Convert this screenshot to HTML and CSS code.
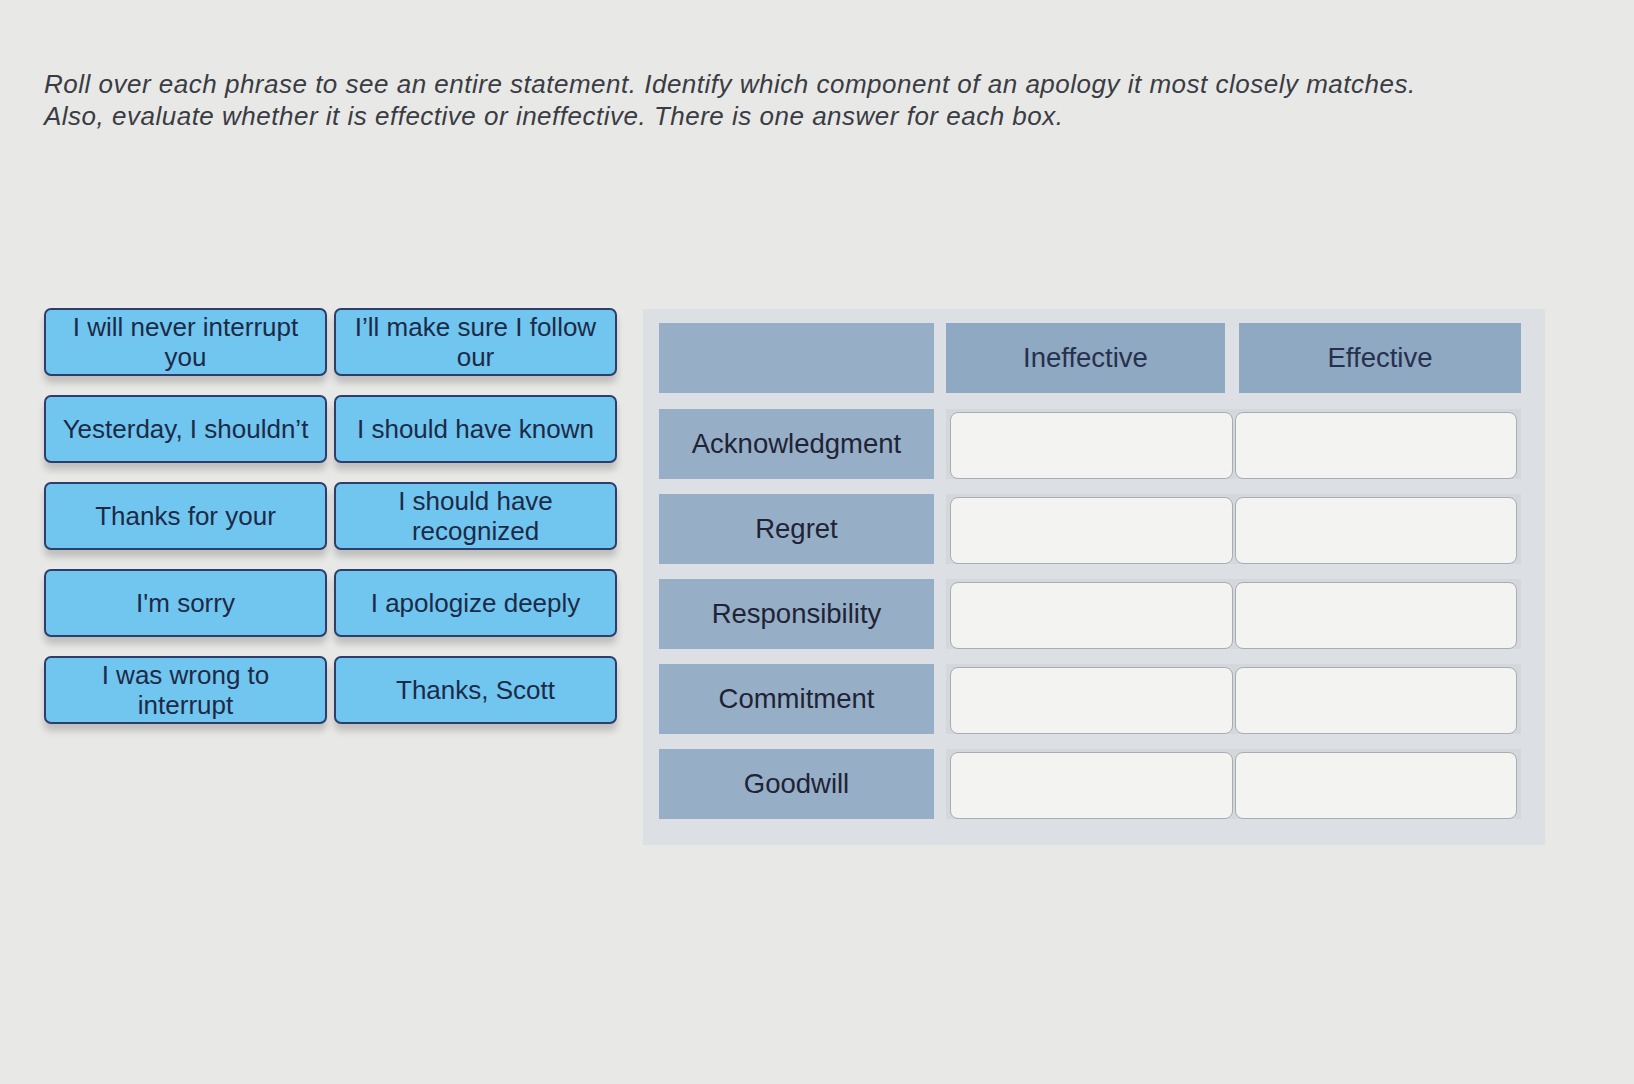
FILE: index.html
```html
<!DOCTYPE html>
<html lang="en">
<head>
<meta charset="utf-8">
<title>Apology components</title>
<link rel="stylesheet" href="styles.css">
</head>
<body>
<div class="page">
  <p class="instructions">Roll over each phrase to see an entire statement. Identify which component of an apology it most closely matches.<br>Also, evaluate whether it is effective or ineffective. There is one answer for each box.</p>
  <div class="activity">
    <div class="tiles">
      <div class="tile">I will never interrupt you</div>
      <div class="tile">I’ll make sure I follow our</div>
      <div class="tile">Yesterday, I shouldn’t</div>
      <div class="tile">I should have known</div>
      <div class="tile">Thanks for your</div>
      <div class="tile">I should have recognized</div>
      <div class="tile">I'm sorry</div>
      <div class="tile">I apologize deeply</div>
      <div class="tile">I was wrong to interrupt</div>
      <div class="tile">Thanks, Scott</div>
    </div>
    <div class="panel">
      <div class="row head">
        <div class="cell label"></div>
        <div class="cell hdr">Ineffective</div>
        <div class="cell hdr eff">Effective</div>
      </div>
      <div class="row">
        <div class="cell label">Acknowledgment</div>
        <div class="drops"><div class="drop"></div><div class="drop"></div></div>
      </div>
      <div class="row">
        <div class="cell label">Regret</div>
        <div class="drops"><div class="drop"></div><div class="drop"></div></div>
      </div>
      <div class="row">
        <div class="cell label">Responsibility</div>
        <div class="drops"><div class="drop"></div><div class="drop"></div></div>
      </div>
      <div class="row">
        <div class="cell label">Commitment</div>
        <div class="drops"><div class="drop"></div><div class="drop"></div></div>
      </div>
      <div class="row">
        <div class="cell label">Goodwill</div>
        <div class="drops"><div class="drop"></div><div class="drop"></div></div>
      </div>
    </div>
  </div>
</div>
</body>
</html>
```
FILE: styles.css
```css
html, body {
  margin: 0;
  padding: 0;
}
body {
  background: #e8e8e6;
  font-family: "Liberation Sans", Arial, sans-serif;
  color: #2c2f3a;
  width: 1634px;
  height: 1084px;
  overflow: hidden;
}
.page {
  padding: 68px 0 0 44px;
}
.instructions {
  margin: 0;
  font-style: italic;
  font-size: 26px;
  letter-spacing: 0.5px;
  line-height: 32px;
  color: #3a3c44;
}
.activity {
  display: flex;
  align-items: flex-start;
  margin-top: 176px;
  gap: 26px;
}
.tiles {
  display: grid;
  grid-template-columns: 283px 283px;
  grid-auto-rows: 68px;
  column-gap: 7px;
  row-gap: 19px;
}
.tile {
  box-sizing: border-box;
  background: #70c6ef;
  border: 2px solid #2e3d6b;
  border-radius: 7px;
  box-shadow: 0 7px 7px rgba(0, 0, 0, 0.18);
  display: flex;
  align-items: center;
  justify-content: center;
  text-align: center;
  font-size: 26px;
  line-height: 30px;
  color: #1d2a47;
  padding: 0 12px;
}
.panel {
  background: #dcdfe3;
  width: 902px;
  box-sizing: border-box;
  padding: 14px 24px 26px 16px;
  display: flex;
  flex-direction: column;
  gap: 15px;
  margin-top: 1px;
}
.row {
  display: flex;
  height: 70px;
  gap: 12px;
}
.row.head {
  margin-bottom: 1px;
}
.cell {
  display: flex;
  align-items: center;
  justify-content: center;
  font-size: 27.5px;
  color: #1f2336;
}
.label {
  width: 275px;
  background: #97afc6;
  flex: none;
}
.hdr {
  width: 279px;
  background: #8fa9c3;
  flex: none;
  color: #27304d;
}
.hdr.eff {
  width: 282px;
  margin-left: 2px;
}
.drops {
  flex: 1;
  display: flex;
  gap: 2px;
  background: #d4d8dd;
  padding: 3px 4px 0 4px;
}
.drop {
  flex: 1;
  background: #f3f3f2;
  border: 1.5px solid #a9acb0;
  border-radius: 8px;
}
```
